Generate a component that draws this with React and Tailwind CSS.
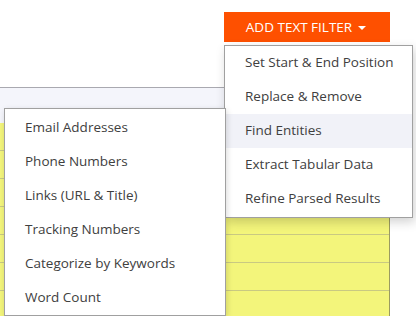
const filters = [
  "Set Start & End Position",
  "Replace & Remove",
  "Find Entities",
  "Extract Tabular Data",
  "Refine Parsed Results",
];

const entities = [
  "Email Addresses",
  "Phone Numbers",
  "Links (URL & Title)",
  "Tracking Numbers",
  "Categorize by Keywords",
  "Word Count",
];

export default function App() {
  return (
    <div className="relative w-[416px] h-[316px] overflow-hidden bg-white font-['Open_Sans',sans-serif] text-[13.5px] text-[#404040]">
      {/* top bar */}
      <div className="h-[87px] flex justify-end pr-[26px] pt-[12px]">
        <button className="h-[30px] w-[166px] bg-[#fe5000] text-white text-[13.5px] flex items-center justify-center gap-[6px] pr-[2px]">
          ADD TEXT FILTER
          <span className="w-0 h-0 border-l-[4px] border-r-[4px] border-t-[4px] border-l-transparent border-r-transparent border-t-white mt-[1px]" />
        </button>
      </div>

      {/* results panel behind menus */}
      <div className="w-[390px] border-t border-[#a9a9b0]">
        <div className="h-[35px] bg-[#f4f5fb]" />
        <div className="bg-[#f3f57b] border-r border-[#9b9b60]">
          {[0, 1, 2, 3, 4, 5].map((i) => (
            <div key={i} className="h-[28px] border-b border-[#c9c982]" />
          ))}
          <div className="h-[30px]" />
        </div>
      </div>

      {/* text filter menu */}
      <ul className="absolute left-[224px] top-[45px] w-[189px] bg-white border border-[#a0a0a0] shadow-[2px_4px_10px_rgba(0,0,0,0.18)] pb-[1px] z-10">
        {filters.map((f) => (
          <li
            key={f}
            className={`h-[34px] flex items-center pl-[20px] pb-[1px] ${f === "Find Entities" ? "bg-[#f1f2f8]" : ""}`}
          >
            {f}
          </li>
        ))}
      </ul>

      {/* find entities submenu */}
      <ul className="absolute left-[4px] top-[108px] w-[222px] bg-white border border-[#a0a0a0] shadow-[1px_2px_6px_rgba(0,0,0,0.15)] pt-[2px] z-20">
        {entities.map((e) => (
          <li key={e} className="h-[34px] flex items-center pl-[20px] pb-[1px]">
            {e}
          </li>
        ))}
      </ul>
    </div>
  );
}
